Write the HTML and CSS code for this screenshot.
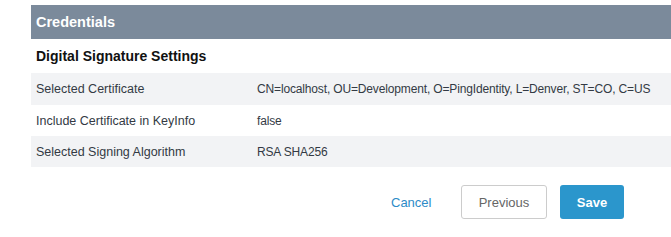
FILE: index.html
```html
<!DOCTYPE html>
<html lang="en">
<head>
    <meta charset="UTF-8">
    <meta name="viewport" content="width=device-width, initial-scale=1.0">
    <title>Credentials</title>
    <link rel="stylesheet" href="styles.css">
</head>
<body>
    <div class="panel">
        <div class="panel-header">Credentials</div>
        <h3 class="section-title">Digital Signature Settings</h3>
        <div class="settings">
            <div class="row">
                <div class="label">Selected Certificate</div>
                <div class="value">CN=localhost, OU=Development, O=PingIdentity, L=Denver, ST=CO, C=US</div>
            </div>
            <div class="row">
                <div class="label">Include Certificate in KeyInfo</div>
                <div class="value">false</div>
            </div>
            <div class="row">
                <div class="label">Selected Signing Algorithm</div>
                <div class="value">RSA SHA256</div>
            </div>
        </div>
        <div class="actions">
            <a href="#" class="cancel">Cancel</a>
            <button type="button" class="btn btn-secondary">Previous</button>
            <button type="button" class="btn btn-primary">Save</button>
        </div>
    </div>
</body>
</html>
```

FILE: styles.css
```css
body {
    font-family: "Liberation Sans", Arial, sans-serif;
    font-size: 12.5px;
    color: #333a44;
    background-color: #ffffff;
    margin: 0;
    padding: 5px 0 0 31px;
}
.panel-header {
    background-color: #7b8a9b;
    color: #ffffff;
    font-size: 14.5px;
    font-weight: bold;
    height: 34px;
    line-height: 34px;
    padding-left: 5px;
}
.section-title {
    font-size: 14px;
    font-weight: bold;
    color: #111111;
    margin: 0;
    height: 34px;
    line-height: 34px;
    padding-left: 5px;
}
.row {
    display: flex;
    height: 31px;
    align-items: center;
    padding-left: 5px;
    white-space: nowrap;
}
.row:nth-child(odd) {
    background-color: #f2f3f5;
}
.row:first-child {
    height: 32px;
}
.label {
    width: 221px;
    flex-shrink: 0;
}
.value {
    font-size: 12px;
    letter-spacing: -0.15px;
}
.actions {
    display: flex;
    align-items: center;
    margin-top: 18px;
    padding-left: 360px;
}
.cancel {
    color: #2d8bc7;
    text-decoration: none;
    font-size: 13px;
    width: 70px;
}
.btn {
    height: 34px;
    border-radius: 3px;
    font-family: "Liberation Sans", Arial, sans-serif;
    font-size: 13px;
    cursor: pointer;
}
.btn-secondary {
    width: 86px;
    background-color: #ffffff;
    border: 1px solid #cccccc;
    color: #666666;
    margin-right: 13px;
}
.btn-primary {
    width: 64px;
    background-color: #2b96cc;
    border: none;
    color: #ffffff;
    font-weight: bold;
}
```
